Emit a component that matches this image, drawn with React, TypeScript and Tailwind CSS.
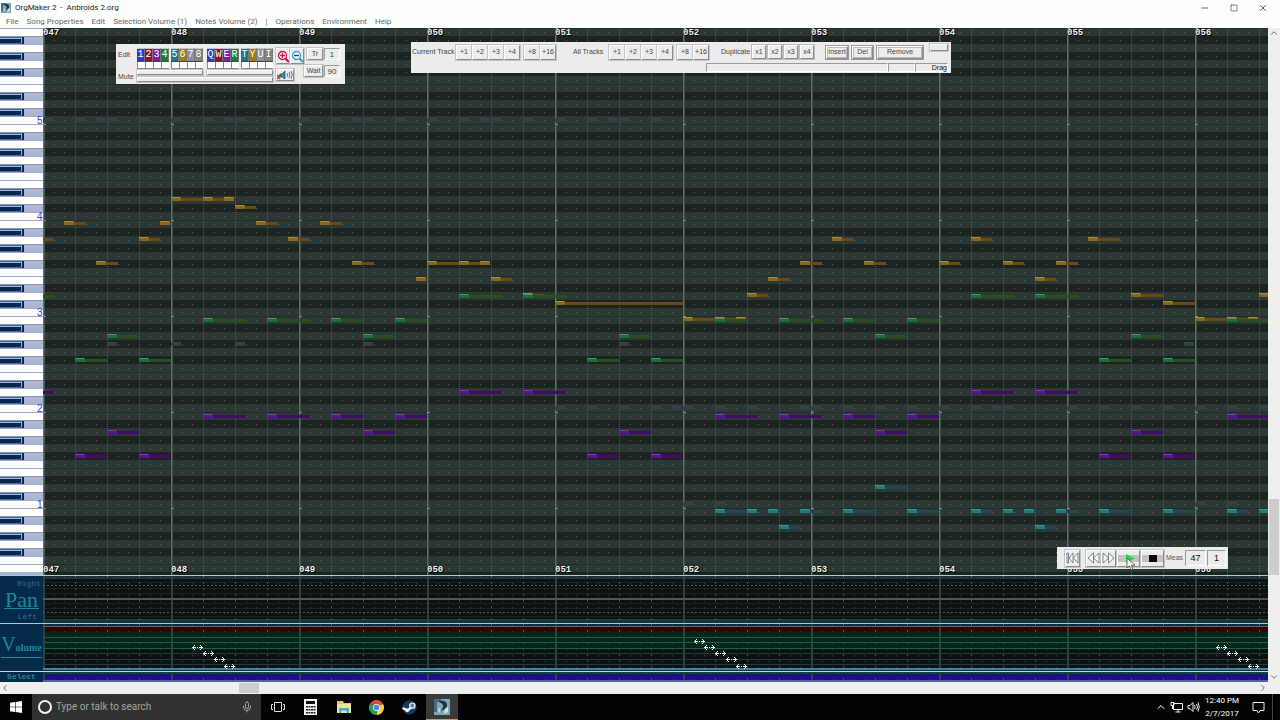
import type { ReactNode } from "react"
import { ChevronDown, ChevronLeft, ChevronRight, ChevronUp, Mic, Minus, X, Square } from "lucide-react"

// one step is a third of a beat, a beat is 32px, a row (semitone) is 8px
const stepX = (s: number) => Math.round((s * 32) / 3)

type Note = [step: number, length: number, row: number]

const LEAD: Note[] = [
  [-1, 2, 26], [2, 2, 24], [5, 2, 29], [9, 2, 26], [11, 1, 24], [12, 3, 21], [15, 2, 21], [17, 1, 21],
  [18, 2, 22], [20, 2, 24], [23, 2, 26], [26, 2, 24], [29, 2, 29], [35, 1, 31], [36, 3, 29], [39, 2, 29],
  [41, 1, 29], [42, 2, 31], [45, 2, 33], [48, 12, 34], [60, 3, 36], [63, 2, 36], [65, 1, 36], [66, 2, 33],
  [68, 2, 31], [71, 2, 29], [74, 2, 26], [77, 2, 29], [84, 2, 29], [87, 2, 26], [90, 2, 29], [93, 2, 31],
  [95, 2, 29], [98, 3, 26], [102, 3, 33], [105, 3, 34], [108, 3, 36], [111, 2, 36], [113, 1, 36], [114, 2, 33],
]

const CHORD: Note[] = [
  [-1, 2, 33], [3, 3, 41], [6, 3, 38], [9, 3, 41], [15, 4, 36], [21, 4, 36], [27, 3, 36], [30, 3, 38],
  [33, 3, 36], [39, 4, 33], [45, 4, 33], [51, 3, 41], [54, 3, 38], [57, 3, 41], [63, 3, 36], [69, 4, 36],
  [75, 3, 36], [78, 3, 38], [81, 3, 36], [87, 4, 33], [93, 4, 33], [99, 3, 41], [102, 3, 38], [105, 3, 41],
  [111, 4, 36],
]

// the low part doubles the chord part an octave down
const LOW: Note[] = CHORD.map(([s, l, r]) => [s, s === 63 ? 4 : l, r + 12])

const BASS: Note[] = [
  [63, 3, 60], [66, 1, 60], [68, 1, 60], [69, 2, 62], [71, 2, 60], [75, 3, 60], [78, 3, 57], [81, 3, 60],
  [87, 2, 60], [90, 1, 60], [92, 1, 60], [93, 2, 62], [95, 2, 60], [99, 3, 60], [105, 3, 60], [111, 2, 60],
  [114, 1, 60],
]

const DRUMS: Note[] = [
  ...[0, 12, 24, 36, 48].flatMap((m) => [0, 3, 5, 6, 9].map((s): Note => [m + s, 1, 11])),
  ...[6, 12, 18, 30, 54, 107].map((s): Note => [s, 1, 39]),
  ...[48, 51, 54, 57, 59, 60, 63, 66, 71, 72, 75, 78, 81, 84, 87, 89, 90, 96, 99, 102, 105, 108, 111, 114].map(
    (s): Note => [s, 1, 47]
  ),
  ...[60, 63, 108, 111].map((s): Note => [s, 1, 59]),
]

const VOLUMES = [
  [14, 24], [15, 30], [16, 36], [17, 43],
  [61, 18], [62, 24], [63, 30], [64, 36], [65, 43],
  [110, 24], [111, 30], [112, 36], [113, 43],
]

const MEASURES = ["047", "048", "049", "050", "051", "052", "053", "054", "055", "056"]
const BLACK_ROWS = [1, 3, 5, 8, 10]
const MENU = ["File", "Song Properties", "Edit", "Selection Volume (1)", "Notes Volume (2)", "|", "Operations", "Environment", "Help"]

type PartProps = { notes: Note[]; head: string; shine: string; tail: string; top?: number }

function Part({ notes, head, shine, tail, top = 1 }: PartProps) {
  return (
    <g>
      {notes.map(([s, len, row], i) => {
        const x = stepX(s)
        const y = row * 8 + top
        return (
          <g key={i}>
            {len > 1 && <rect x={x} y={y + 1} width={stepX(s + len) - x} height={3} fill={tail} />}
            {s >= 0 && <rect x={x} y={y} width={10} height={4} fill={head} />}
            {s >= 0 && <rect x={x} y={y} width={9} height={1} fill={shine} />}
          </g>
        )
      })}
    </g>
  )
}

function Roll() {
  return (
    <svg className="block w-full h-[547px]" shapeRendering="crispEdges">
      <defs>
        <pattern id="rows" width="128" height="96" patternUnits="userSpaceOnUse">
          <rect width="128" height="96" fill="#2c3836" />
          {BLACK_ROWS.map((r) => (
            <rect key={r} y={r * 8} width="128" height="8" fill="#1c2422" />
          ))}
          <rect y="0" width="128" height="1" fill="#222c2a" />
          <rect y="56" width="128" height="1" fill="#222c2a" />
        </pattern>
        <pattern id="ticks" width="32" height="8" patternUnits="userSpaceOnUse">
          <rect x="11" y="4" width="1" height="1" fill="#56635c" />
          <rect x="21" y="4" width="1" height="1" fill="#56635c" />
          {[0, 2, 4, 6].map((y) => (
            <rect key={y} x="0" y={y} width="1" height="1" fill="#4d5953" />
          ))}
        </pattern>
        <pattern id="measures" width="128" height="96" patternUnits="userSpaceOnUse">
          <rect width="1" height="96" fill="#5c7060" />
          <rect x="1" width="1" height="96" fill="#42534a" />
          <rect width="3" height="1" fill="#7c8f80" />
        </pattern>
      </defs>
      <rect width="100%" height="547" fill="url(#rows)" />
      <rect width="100%" height="547" fill="url(#ticks)" />
      <rect width="100%" height="547" fill="url(#measures)" />
      <Part notes={DRUMS} head="#323d44" shine="#3b4750" tail="#323d44" top={2} />
      <Part notes={BASS} head="#1f7b7b" shine="#379b98" tail="#20494f" />
      <Part notes={LOW} head="#5f1390" shine="#8b35b8" tail="#410c63" top={2} />
      <Part notes={LEAD} head="#8d661c" shine="#b08a38" tail="#6b4a18" />
      <Part notes={CHORD} head="#1f6e3a" shine="#3f9a55" tail="#28501f" top={2} />
    </svg>
  )
}

function Keyboard() {
  return (
    <svg className="block w-[43px] h-[547px] shrink-0" shapeRendering="crispEdges">
      <defs>
        <pattern id="keys" width="43" height="96" patternUnits="userSpaceOnUse">
          <rect width="43" height="96" fill="#fdfffc" />
          {[0, 16, 32, 48, 56, 72, 88].map((y) => (
            <rect key={y} y={y} width="43" height="1" fill="#9fa9d4" />
          ))}
          {BLACK_ROWS.map((r) => (
            <g key={r}>
              <rect y={r * 8} width="43" height="8" fill="#abb7d2" />
              <rect y={r * 8} width="43" height="1" fill="#8c97c4" />
              <rect y={r * 8 + 1} width="24" height="7" fill="#4b6795" />
              <rect y={r * 8 + 2} width="23" height="1" fill="#a5b9d4" />
              <rect y={r * 8 + 3} width="21" height="4" fill="#08264a" />
              <rect x="21" y={r * 8 + 2} width="1" height="5" fill="#a5b9d4" />
              <rect x="22" y={r * 8 + 1} width="2" height="7" fill="#0d2648" />
            </g>
          ))}
        </pattern>
      </defs>
      <rect width="43" height="547" fill="url(#keys)" />
      <rect y="544" width="43" height="3" fill="#abb7d2" />
      {[5, 4, 3, 2, 1].map((n, i) => (
        <text key={n} x="37" y={96 + i * 96} fontSize="10" fill="#3b3bcc" fontFamily="Liberation Sans, sans-serif">
          {n}
        </text>
      ))}
    </svg>
  )
}

function MeasureLabels() {
  return (
    <div className="flex overflow-hidden">
      {MEASURES.map((m) => (
        <span
          key={m}
          className="w-32 shrink-0 font-['Liberation_Mono',monospace] text-[9px] leading-[10px] font-bold text-[#f0f4ee] [text-shadow:1px_1px_0_#000,-1px_0_0_#111]"
        >
          {m}
        </span>
      ))}
    </div>
  )
}

function LaneGrid({ id }: { id: string }) {
  return (
    <>
      <defs>
        <pattern id={id} width="128" height="6" patternUnits="userSpaceOnUse">
          <rect width="2" height="6" fill="#2c423c" />
          {[32, 64, 96].map((x) => (
            <rect key={x} x={x} y="1" width="1" height="2" fill="#46544f" />
          ))}
          {[11, 21, 43, 53, 75, 85, 107, 117].map((x) => (
            <rect key={x} x={x} y="2" width="1" height="1" fill="#35413d" />
          ))}
        </pattern>
      </defs>
      <rect width="100%" height="48" fill={`url(#${id})`} />
    </>
  )
}

function PanLane() {
  return (
    <svg className="block w-full h-12" shapeRendering="crispEdges">
      <rect width="100%" height="48" fill="#0c1112" />
      <rect width="100%" height="4" fill="#1d3236" />
      <rect y="44" width="100%" height="2" fill="#2b3833" />
      <rect y="46" width="100%" height="2" fill="#15333f" />
      {[7, 13, 18, 28, 33, 41].map((y) => (
        <rect key={y} y={y} width="100%" height="1" fill="#1a2425" />
      ))}
      <LaneGrid id="panGrid" />
      <line x1="0" x2="100%" y1="10" y2="10" stroke="#52605a" strokeDasharray="2 2" />
      <line x1="0" x2="100%" y1="37" y2="37" stroke="#445c48" strokeDasharray="2 2" />
      <line x1="0" x2="100%" y1="3" y2="3" stroke="#31453f" strokeDasharray="1 2" />
      <rect y="23" width="100%" height="2" fill="#54554f" />
      <rect width="100%" height="1" fill="#a9cfcc" />
    </svg>
  )
}

function VolumeLane() {
  return (
    <svg className="block w-full h-12" shapeRendering="crispEdges">
      <rect width="100%" height="48" fill="#0c1112" />
      <rect width="100%" height="3" fill="#0b2c44" />
      <rect y="4" width="100%" height="5" fill="#3a0205" />
      <rect y="9" width="100%" height="16" fill="#03281a" />
      <LaneGrid id="volumeGrid" />
      <rect y="3" width="100%" height="1" fill="#4e706f" />
      {[14, 19, 25].map((y) => (
        <rect key={y} y={y} width="100%" height="1" fill="#1f5c4b" />
      ))}
      {[30, 36, 41].map((y) => (
        <rect key={y} y={y} width="100%" height="1" fill="#203d3e" />
      ))}
      <rect y="45" width="100%" height="2" fill="#4a7f98" />
      <rect y="47" width="100%" height="1" fill="#0b2c44" />
      <rect width="100%" height="1" fill="#9ccfe0" />
      {VOLUMES.map(([s, y]) => (
        <g key={`${s}-${y}`} transform={`translate(${stepX(s)} ${y})`} fill="#f1f4ee">
          <path d="M0 0h4v1H0zM1 -1h1v3H1zM2 -2h1v1H2zM2 2h1v1H2zM5 0h1v1H5zM7 0h4v1H7zM9 -1h1v3H9zM8 -2h1v1H8zM8 2h1v1H8z" />
        </g>
      ))}
    </svg>
  )
}

function SelectLane() {
  return (
    <svg className="block w-full h-[11px]" shapeRendering="crispEdges">
      <rect width="100%" height="11" fill="#1d1083" />
      <LaneGrid id="selectGrid" />
      <rect width="100%" height="1" fill="#b8dce4" />
      <rect y="1" width="100%" height="2" fill="#0d443f" />
      <rect y="9" width="100%" height="2" fill="#4d63a5" />
    </svg>
  )
}

const raised = "border border-t-white border-l-white border-r-[#8b8b8b] border-b-[#8b8b8b] bg-[#ecedeb] shadow-[0_0_0_1px_#c4c4c4]"
const sunken = "border border-t-[#9a9a9a] border-l-[#9a9a9a] border-r-white border-b-white bg-[#ecedeb]"

function Tool({ children, className = "", label }: { children?: ReactNode; className?: string; label?: string }) {
  return (
    <button aria-label={label} className={`flex items-center justify-center overflow-hidden whitespace-nowrap ${raised} ${className}`}>
      {children}
    </button>
  )
}

const TRACKS = [
  ["1", "bg-[#3138c8]"], ["2", "bg-[#8a1420]"], ["3", "bg-[#7d1bb0]"], ["4", "bg-[#1c7a3c]"],
  ["5", "bg-[#1f7788]"], ["6", "bg-[#a37a14]"], ["7", "bg-[#8b929e]"], ["8", "bg-[#85827a]"],
  ["Q", "bg-[#3138c8]"], ["W", "bg-[#8a1420]"], ["E", "bg-[#7d1bb0]"], ["R", "bg-[#1c7a3c]"],
  ["T", "bg-[#1f7788]"], ["Y", "bg-[#a37a14]"], ["U", "bg-[#8b929e]"], ["I", "bg-[#85827a]"],
]

function TrackGroup({ tracks }: { tracks: string[][] }) {
  const column = ([name, color]: string[]) => (
    <div key={name} className="flex w-2 flex-col">
      <button
        className={`h-[14px] w-2 border-t border-r border-b border-t-[#c9c9c9] border-r-[#777] border-b-[#444] text-center font-['Liberation_Mono',monospace] text-[10px] leading-[12px] text-white ${color}`}
      >
        {name}
      </button>
      <input type="checkbox" aria-label={`Mute ${name}`} className="h-[7px] w-2 appearance-none border-l border-b border-[#8d8d8d] bg-white" />
    </div>
  )
  return (
    <div className="flex flex-col gap-px">
      <div className="flex gap-0.5">
        <div className="flex">{tracks.slice(0, 4).map(column)}</div>
        <div className="flex">{tracks.slice(4).map(column)}</div>
      </div>
      <Tool label={`Mute tracks ${tracks[0][0]} to ${tracks[7][0]}`} className="h-[5px] w-full" />
    </div>
  )
}

function Magnifier({ color, plus }: { color: string; plus?: boolean }) {
  return (
    <svg viewBox="0 0 13 13" className="size-[13px] shrink-0">
      <circle cx="5.5" cy="5.5" r="4" fill="#fff" stroke={color} strokeWidth="1.4" />
      <path d={plus ? "M3 5.5h5M5.5 3v5" : "M3 5.5h5"} stroke={plus ? color : "#333f66"} strokeWidth="1.4" />
      <path d="M8.6 8.6l3.4 3.4" stroke={color} strokeWidth="2.2" />
    </svg>
  )
}

function TrackPanel() {
  return (
    <section className="absolute top-4 left-[73px] flex h-10 w-[229px] bg-[#ecedeb] pt-1 pl-0.5 text-[7px] leading-[10px] text-[#444]">
      <div className="flex w-[19px] flex-col justify-between py-0.5">
        <span>Edit</span>
        <span>Mute</span>
      </div>
      <div className="flex w-[136px] flex-col gap-0.5">
        <div className="flex justify-between">
          <TrackGroup tracks={TRACKS.slice(0, 8)} />
          <TrackGroup tracks={TRACKS.slice(8)} />
        </div>
        <Tool label="Mute all" className="h-[5px] w-full" />
      </div>
      <div className="ml-[3px] flex w-7 flex-col gap-[5px]">
        <div className="flex">
          <Tool label="Zoom in" className="h-4 w-[14px]"><Magnifier color="#c2185b" plus /></Tool>
          <Tool label="Zoom out" className="h-4 w-[14px]"><Magnifier color="#2fa3d6" /></Tool>
        </div>
        <Tool label="Sound" className="h-3 w-[18px]">
          <svg viewBox="0 0 16 10" className="h-2.5 w-4">
            <path d="M0 5l3 4M3 5l-3 4" stroke="#d22" strokeWidth="1.3" />
            <path d="M3 4h2l3-3v8L5 7H3z" fill="#2a96a5" stroke="#133" strokeWidth=".6" />
            <path d="M10 3q1.500 2 0 4M12 2q2 3 0 6M14 1q2.500 4 0 8" fill="none" stroke="#2a96a5" />
          </svg>
        </Tool>
      </div>
      <div className="flex flex-col gap-[5px]">
        <div className="flex items-center justify-end gap-px">
          <Tool className="h-3 w-4">Tr</Tool>
          <input aria-label="Track" defaultValue="1" className={`h-3 w-4 text-center text-[8px] ${sunken}`} />
        </div>
        <div className="flex items-center gap-px">
          <Tool className="h-3 w-[19px]">Wait</Tool>
          <input aria-label="Wait" defaultValue="90" className={`h-3 w-4 text-center text-[8px] ${sunken}`} />
        </div>
      </div>
    </section>
  )
}

function Shifts() {
  return (
    <div className="flex gap-1">
      <div className="flex">
        {["+1", "+2", "+3", "+4"].map((t) => (
          <Tool key={t} className="h-[15px] w-4">{t}</Tool>
        ))}
      </div>
      <div className="flex">
        {["+8", "+16"].map((t) => (
          <Tool key={t} className="h-[15px] w-4">{t}</Tool>
        ))}
      </div>
    </div>
  )
}

function EditPanel() {
  const framed = "h-[13px] outline outline-[#999] shadow-[inset_0_0_0_1px_#bbb]"
  return (
    <section className="absolute top-[14px] left-[368px] flex h-[31px] w-[540px] flex-col gap-[3px] bg-[#ecedeb] pt-0.5 pr-[3px] pl-px text-[7px] leading-[10px] text-[#444]">
      <div className="flex h-4 items-center">
        <span className="w-11 whitespace-nowrap">Current Track</span>
        <Shifts />
        <span className="ml-[17px] w-9 whitespace-nowrap">All Tracks</span>
        <Shifts />
        <span className="ml-3 w-[31px] whitespace-nowrap">Duplicate</span>
        <div className="flex gap-0.5">
          {["x1", "x2", "x3", "x4"].map((t) => (
            <Tool key={t} className="h-[14px] w-[14px] outline outline-[#bbb]">{t}</Tool>
          ))}
        </div>
        <div className="ml-3 flex gap-1">
          <Tool className={`w-[22px] ${framed}`}>Insert</Tool>
          <Tool className={`w-[21px] ${framed}`}>Del</Tool>
          <Tool className={`w-[46px] ${framed}`}>Remove</Tool>
        </div>
        <Tool label="Collapse" className="ml-auto h-[7px] w-[18px] self-start" />
      </div>
      <div className="flex h-[9px] justify-end leading-[8px]">
        <div className={`w-[182px] ${sunken}`} />
        <div className={`w-[27px] ${sunken}`} />
        <div className={`w-[33px] text-right text-[#111] ${sunken}`}>Drag</div>
      </div>
    </section>
  )
}

function Skip({ d }: { d: string }) {
  return (
    <svg viewBox="0 0 13 12" className="h-3 w-[13px] shrink-0">
      <path d={d} fill="#f7fbff" stroke="#5c6b7a" strokeWidth=".8" />
    </svg>
  )
}

function Transport() {
  return (
    <section className="absolute right-10 bottom-1.5 flex h-[22px] w-[171px] items-center bg-[#ecedeb] pl-2 text-[7px] text-[#555]">
      <Tool label="Rewind to start" className="h-[17px] w-[15px]">
        <Skip d="M1 1h1.500v10H1zM7 1v10L3 6zM12 1v10L7.500 6z" />
      </Tool>
      <div className="ml-1.5 flex">
        <Tool label="Back" className="h-[17px] w-[15px]"><Skip d="M6.500 1v10L1 6zM12 1v10L6.500 6z" /></Tool>
        <Tool label="Forward" className="h-[17px] w-[15px]"><Skip d="M1 1v10L6.500 6zM6.500 1v10L12 6z" /></Tool>
      </div>
      <div className="ml-px flex gap-px">
        <Tool label="Play" className="h-[17px] w-[23px]">
          <svg viewBox="0 0 21 15" className="h-[15px] w-[21px]">
            <path d="M0 4h21v7H0z" fill="#c2c3c2" />
            <path d="M8 3l9 4.500L8 12z" fill="#27d457" />
          </svg>
        </Tool>
        <Tool label="Stop" className="h-[17px] w-[23px]">
          <svg viewBox="0 0 21 15" className="h-[15px] w-[21px]">
            <path d="M0 4h21v7H0z" fill="#c2c3c2" />
            <path d="M7 4h8v7H7z" fill="#0a0a0a" />
          </svg>
        </Tool>
      </div>
      <label htmlFor="measure" className="ml-0.5 w-[18px]">Meas</label>
      <input id="measure" defaultValue="47" className={`ml-px h-4 w-[21px] text-center text-[9px] text-[#111] ${sunken}`} />
      <input aria-label="Beat" defaultValue="1" className={`ml-px h-4 w-[19px] text-center text-[9px] text-[#111] ${sunken}`} />
      <svg viewBox="0 0 10 14" className="absolute top-2.5 left-[69px] h-[14px] w-2.5">
        <path d="M1 1v10l2.500-2.300L5.200 13l1.700-.8-1.700-4H9z" fill="#fff" stroke="#444" strokeWidth=".8" />
      </svg>
    </section>
  )
}

function AppIcon({ className }: { className: string }) {
  return (
    <svg viewBox="0 0 16 16" className={className}>
      <path d="M0 0h16v16H0z" fill="#82a5b4" />
      <path d="M0 0h7v3H3v10H0z" fill="#456b7e" />
      <path d="M4 2c5-1 9 0 9 4 0 3-3 5-7 6 2-2 4-4 3-6S6 4 4 2z" fill="#123447" />
      <path d="M4 9l3 1-2 4zM11 10l3-2v5l-4 2z" fill="#d3e4e8" />
    </svg>
  )
}

function Taskbar() {
  const cell = "flex h-full w-[33px] items-center justify-center"
  return (
    <footer className="flex h-[26px] items-center bg-[#030303] font-[Roboto,sans-serif] text-white">
      <button aria-label="Start" className="flex h-full w-8 items-center justify-center">
        <svg viewBox="0 0 12 12" className="size-3" fill="#fff">
          <path d="M0 1.700l5-.7v4.700H0zM5.600.9L12 0v5.700H5.600zM0 6.300h5V11l-5-.7zM5.600 6.300H12V12l-6.400-.9z" />
        </svg>
      </button>
      <div className="flex h-full w-[229px] items-center gap-1 bg-[#31322f] pr-2 pl-1.5">
        <span className="size-[14px] shrink-0 rounded-full border-2 border-[#f2f2f2]" />
        <input
          aria-label="Search"
          placeholder="Type or talk to search"
          className="min-w-0 flex-1 bg-transparent text-[10px] leading-[14px] outline-none placeholder:text-[#a3a49f]"
        />
        <Mic className="size-3 text-[#a3a49f]" strokeWidth={2} />
      </div>
      <button aria-label="Task view" className={cell}>
        <svg viewBox="0 0 14 12" className="h-3 w-[14px]" fill="none" stroke="#ddd">
          <path d="M3.500 1.500h7v9h-7zM2 3.500H.5v5H2M12 3.500h1.500v5H12" />
        </svg>
      </button>
      <button aria-label="Calculator" className={cell}>
        <svg viewBox="0 0 13 16" className="h-4 w-[13px]">
          <path d="M0 0h13v16H0z" fill="#f5f5f5" />
          <path d="M2 2h9v3H2z" fill="#111" />
          {[7, 10, 13].map((y) => (
            <path key={y} d={`M2 ${y}h2v1.500H2zM4.500 ${y}h2v1.500h-2zM7 ${y}h2v1.500H7zM9.500 ${y}h2v1.500h-2z`} fill="#222" />
          ))}
        </svg>
      </button>
      <button aria-label="File explorer" className={cell}>
        <svg viewBox="0 0 16 14" className="h-[14px] w-4">
          <path d="M1 1h6l1 2h7v10H1z" fill="#e9c95f" />
          <path d="M1 4h14v9H1z" fill="#f7e29a" />
          <path d="M3 13V8h10v5h-2.500v-2.500h-5V13z" fill="#49acd2" />
        </svg>
      </button>
      <button aria-label="Chrome" className={cell}>
        <svg viewBox="0 0 16 16" className="size-[15px]">
          <path d="M8 8L1.070 4A8 8 0 0 1 14.930 4z" fill="#dd4b3e" />
          <path d="M8 8L14.930 4A8 8 0 0 1 8 16z" fill="#f7cf45" />
          <path d="M8 8v8A8 8 0 0 1 1.070 4z" fill="#2ba24c" />
          <circle cx="8" cy="8" r="3.700" fill="#f4f4f4" />
          <circle cx="8" cy="8" r="2.900" fill="#4687ee" />
        </svg>
      </button>
      <button aria-label="Steam" className={cell}>
        <svg viewBox="0 0 16 16" className="size-[15px]">
          <circle cx="8" cy="8" r="7.500" fill="#163a63" />
          <path d="M.6 8.500L6 11l5-4" fill="none" stroke="#eef2f6" strokeWidth="2.400" />
          <circle cx="11" cy="6" r="2.800" fill="#5d83a8" stroke="#eef2f6" strokeWidth="1.300" />
          <circle cx="5.500" cy="11" r="2" fill="#eef2f6" />
        </svg>
      </button>
      <button aria-label="OrgMaker 2" className="flex h-full w-8 items-center justify-center border-b border-[#d9924f] bg-[#393b3a]">
        <AppIcon className="size-4" />
      </button>
      <div className="ml-auto flex h-full items-center">
        <div className="flex items-center gap-[3px] pr-1">
          <ChevronUp className="size-3" />
          <svg viewBox="0 0 14 12" className="h-3 w-[14px]" fill="none" stroke="#eee">
            <path d="M3.500 2.500h9v6h-9zM5.500 11h5M8 8.500V11M1 1.500h3v3H1zM2.500 4.500V8" />
          </svg>
          <svg viewBox="0 0 13 12" className="h-3 w-[13px]" fill="none" stroke="#eee">
            <path d="M1 4.500h2l3-3v9l-3-3H1zM7.500 4q1.200 2 0 4M9.500 3q2 3 0 6M11 1.500q2.500 4.500 0 9" />
          </svg>
        </div>
        <div className="w-9 text-center text-[8px] leading-[13px] whitespace-nowrap">
          <div>12:40 PM</div>
          <div>2/7/2017</div>
        </div>
        <button aria-label="Notifications" className="ml-1 flex w-7 justify-center">
          <svg viewBox="0 0 13 13" className="size-[13px]" fill="none" stroke="#eee">
            <path d="M1 1.500h11v8H8L6.500 12 5 9.500H1z" />
          </svg>
        </button>
        <span className="h-full w-2 border-l border-[#444]" />
      </div>
    </footer>
  )
}

export default function App() {
  return (
    <div className="min-h-screen overflow-hidden bg-[#fdfffc] font-['Liberation_Sans',Arial,sans-serif]">
      <header className="flex h-[15px] items-center pl-px font-[Roboto,sans-serif] text-[8px] leading-[14px] text-[#222]">
        <AppIcon className="mr-1 size-2.5" />
        <h1 className="whitespace-pre">OrgMaker 2  -  Anbroids 2.org</h1>
        <div className="ml-auto flex gap-5 pr-3 text-[#444]">
          <button aria-label="Minimize"><Minus className="size-2.5" strokeWidth={2} /></button>
          <button aria-label="Maximize"><Square className="size-2" strokeWidth={2} /></button>
          <button aria-label="Close"><X className="size-2.5" strokeWidth={2} /></button>
        </div>
      </header>
      <nav className="flex h-[13px] items-center gap-2 pl-1.5 font-[Roboto,sans-serif] text-[8px] leading-[12px] whitespace-nowrap text-[#666]">
        {MENU.map((m) => (m === "|" ? <span key={m}>|</span> : <button key={m}>{m}</button>))}
      </nav>

      <div className="flex">
        <main className="min-w-0 flex-1">
          <div className="flex">
            <Keyboard />
            <div className="relative min-w-0 flex-1 overflow-hidden">
              <Roll />
              <div className="absolute inset-x-0 top-0"><MeasureLabels /></div>
              <div className="absolute inset-x-0 bottom-0"><MeasureLabels /></div>
              <TrackPanel />
              <EditPanel />
              <Transport />
            </div>
          </div>
          <div className="flex">
            <div className="flex h-12 w-[43px] shrink-0 flex-col border-t border-[#a9cfcc] bg-[#052a4a] px-1 text-right font-['Liberation_Mono',monospace] text-[8px] text-[#386a9f]">
              <span className="-mr-0.5 leading-[15px]">Right</span>
              <span className="border-b border-[#1b8a96] text-center font-['Liberation_Serif',serif] text-[22px] leading-[17px] text-[#1b8a96]">Pan</span>
              <span className="pr-0.5 leading-[15px]">Left</span>
            </div>
            <div className="min-w-0 flex-1"><PanLane /></div>
          </div>
          <div className="flex">
            <div className="flex h-12 w-[43px] shrink-0 flex-col border-t border-[#9ccfe0] bg-[#052a4a] px-px pt-[11px] font-['Liberation_Serif',serif] text-[#1b8a96]">
              <span className="border-b border-[#1b8a96] text-center text-[10px] leading-[18px] font-bold whitespace-nowrap">
                <span className="text-[20px] font-normal">V</span>olume
              </span>
            </div>
            <div className="min-w-0 flex-1"><VolumeLane /></div>
          </div>
          <div className="flex">
            <div className="h-[11px] w-[43px] shrink-0 border-t border-[#b8dce4] bg-[#052a4a] text-center font-['Liberation_Mono',monospace] text-[8px] leading-[10px] font-bold text-[#1b8a96]">
              Select
            </div>
            <div className="min-w-0 flex-1"><SelectLane /></div>
          </div>
        </main>
        <div className="flex w-3 flex-col items-center bg-[#efefed] text-[#555]">
          <ChevronUp className="size-2.5" />
          <div className="mt-[461px] h-[76px] w-[10px] bg-[#cdcdcb]" />
          <ChevronDown className="mt-auto size-2.5" />
        </div>
      </div>

      <div className="flex h-3 items-center bg-[#efefed] text-[#555]">
        <ChevronLeft className="size-2.5" />
        <div className="ml-[229px] h-2.5 w-5 bg-[#cdcdcb]" />
        <ChevronRight className="mr-3 ml-auto size-2.5" />
      </div>
      <Taskbar />
    </div>
  )
}
